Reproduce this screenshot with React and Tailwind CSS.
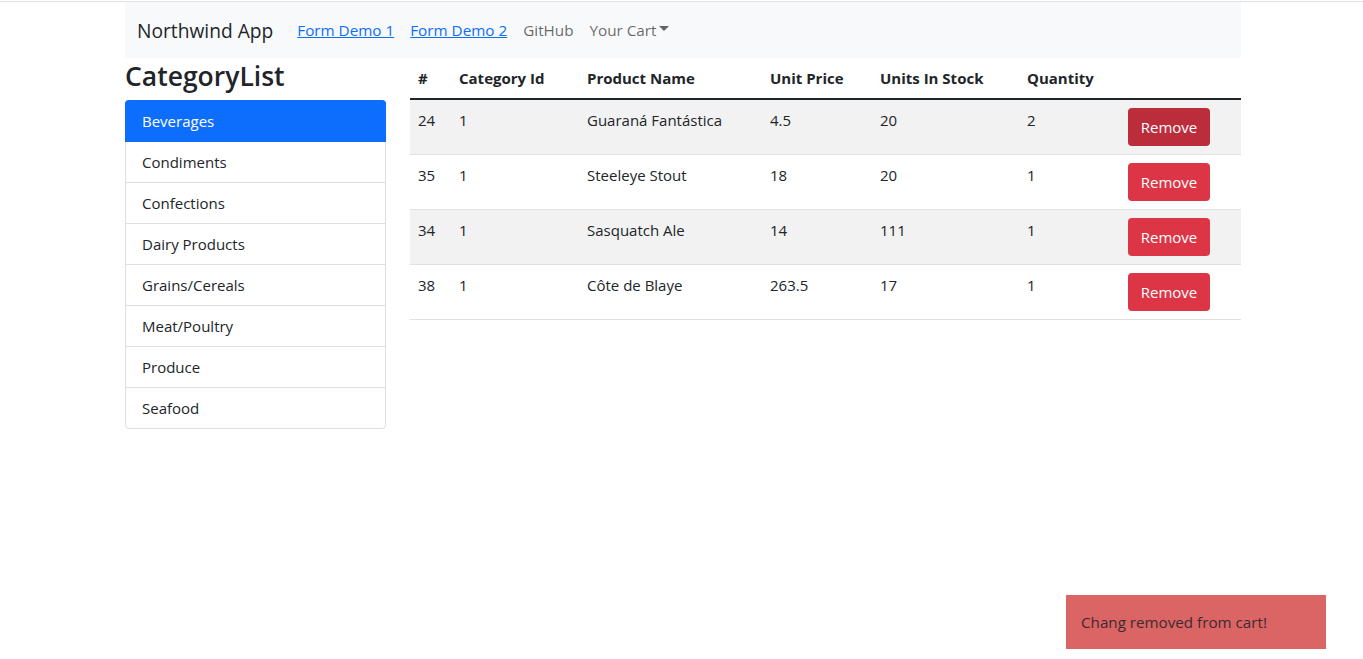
const categories = ['Beverages', 'Condiments', 'Confections', 'Dairy Products', 'Grains/Cereals', 'Meat/Poultry', 'Produce', 'Seafood'];

const items = [
  { id: 24, categoryId: 1, name: 'Guaraná Fantástica', price: 4.5, stock: 20, quantity: 2 },
  { id: 35, categoryId: 1, name: 'Steeleye Stout', price: 18, stock: 20, quantity: 1 },
  { id: 34, categoryId: 1, name: 'Sasquatch Ale', price: 14, stock: 111, quantity: 1 },
  { id: 38, categoryId: 1, name: 'Côte de Blaye', price: 263.5, stock: 17, quantity: 1 },
];

export default function App() {
  return (
    <div className="min-h-[659px] pt-px bg-white text-[15px] leading-[24px] text-[#212529] font-['Open_Sans',sans-serif] relative">
      <div className="border-t border-[#dee2e6]">
        <div className="w-[1116px] ml-[125px]">
          <nav className="h-[56px] bg-[#f8f9fa] flex items-center px-3 pt-[2px]">
            <a className="text-[19.2px] text-[#212529] mr-4 leading-[30px]">Northwind App</a>
            <div className="flex items-center text-[15.25px] mb-[2px]">
              <a className="px-2 text-[#0d6efd] underline">Form Demo 1</a>
              <a className="px-2 text-[#0d6efd] underline">Form Demo 2</a>
              <a className="px-2 text-[#00000099]">GitHub</a>
              <a className="px-2 text-[#00000099] flex items-center">
                Your Cart
                <span className="ml-[2px] mb-[4px] w-0 h-0 border-x-[5px] border-x-transparent border-t-[5px] border-t-[#00000099]" />
              </a>
            </div>
          </nav>

          <div className="flex">
            <div className="w-[261px] shrink-0 mr-6">
              <h4 className="text-[26.5px] leading-[29px] font-semibold mt-1 mb-[9px]">CategoryList</h4>
              <ul className="border border-[#dfdfdf] rounded-[4px]">
                {categories.map((c, i) => (
                  <li
                    key={c}
                    className={
                      i === 0
                        ? 'relative z-10 h-[42px] -m-px rounded-t-[4px] bg-[#0d6efd] text-white px-[17px] flex items-center'
                        : 'h-[41px] border-t border-[#dfdfdf] px-4 flex items-center'
                    }
                  >
                    {c}
                  </li>
                ))}
              </ul>
            </div>

            <table className="w-[831px] h-fit border-collapse">
              <thead>
                <tr className="h-[41px] border-b-2 border-[#212529] text-left">
                  <th className="px-2 w-[41px] font-bold">#</th>
                  <th className="px-2 w-[128px] font-bold">Category Id</th>
                  <th className="px-2 w-[183px] font-bold">Product Name</th>
                  <th className="px-2 w-[110px] font-bold">Unit Price</th>
                  <th className="px-2 w-[147px] font-bold">Units In Stock</th>
                  <th className="px-2 w-[101px] font-bold">Quantity</th>
                  <th className="px-2"></th>
                </tr>
              </thead>
              <tbody>
                {items.map((item, i) => (
                  <tr key={item.id} className={i % 2 === 0 ? 'h-[55px] border-b border-[#dee2e6] bg-[#f2f2f2]' : 'h-[55px] border-b border-[#dee2e6]'}>
                    <td className="px-2 pt-2 align-top">{item.id}</td>
                    <td className="px-2 pt-2 align-top">{item.categoryId}</td>
                    <td className="px-2 pt-2 align-top">{item.name}</td>
                    <td className="px-2 pt-2 align-top">{item.price}</td>
                    <td className="px-2 pt-2 align-top">{item.stock}</td>
                    <td className="px-2 pt-2 align-top">{item.quantity}</td>
                    <td className="px-2 pt-2 align-top">
                      <button className={i === 0 ? 'h-[38px] w-[82px] rounded-[4px] text-white bg-[#bb2d3b]' : 'h-[38px] w-[82px] rounded-[4px] text-white bg-[#dc3545]'}>
                        Remove
                      </button>
                    </td>
                  </tr>
                ))}
              </tbody>
            </table>
          </div>
        </div>
      </div>

      {/* toast */}
      <div className="absolute left-[1066px] top-[595px] w-[260px] h-[54px] bg-[#db6464] text-[#3c2b30] text-[15.2px] flex items-center px-[15px]">
        Chang removed from cart!
      </div>
    </div>
  );
}
